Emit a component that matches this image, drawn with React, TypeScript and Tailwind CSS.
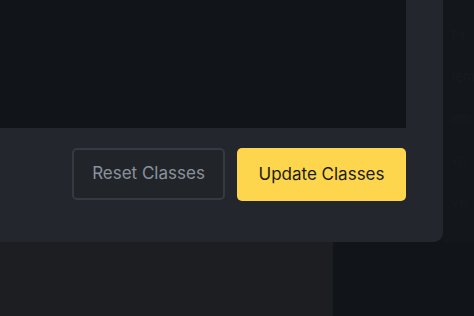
import React from "react";

export default function App() {
  const faint = ["px", "rem", "em", "vh", "vw"];
  return (
    <div
      className="w-[474px] h-[316px] overflow-hidden bg-[#111418] flex flex-col"
      style={{ fontFamily: "Inter, 'Noto Sans', sans-serif" }}
    >
      <div className="flex h-[242px]">
        <div className="w-[443px] h-[242px] shrink-0 bg-[#23262d] rounded-br-[9px] flex flex-col">
          <div className="w-[406px] h-[128px] bg-[#111418]" />
          <div className="w-[406px] flex justify-end gap-3 mt-5">
            <button className="w-[153px] h-[52px] rounded-[5px] border-2 border-[#353a42] bg-[#212429] text-[#8b929c] text-[17px] flex items-center justify-center">
              Reset Classes
            </button>
            <button className="w-[169px] h-[53px] rounded-[5px] bg-[#fdd64d] text-[#1a1a17] text-[17px] flex items-center justify-center">
              Update Classes
            </button>
          </div>
        </div>
        <div className="flex-1 bg-[#13161a] flex flex-col pt-[24px] gap-[22px] pl-2 overflow-hidden">
          {faint.map((t) => (
            <div key={t} className="text-[13px] leading-[20px] text-[#171b20] whitespace-nowrap">
              {t}
            </div>
          ))}
        </div>
      </div>
      <div className="flex flex-1">
        <div className="w-[333px] bg-[#1c1e22]" />
        <div className="flex-1 bg-[#111418]" />
      </div>
    </div>
  );
}
